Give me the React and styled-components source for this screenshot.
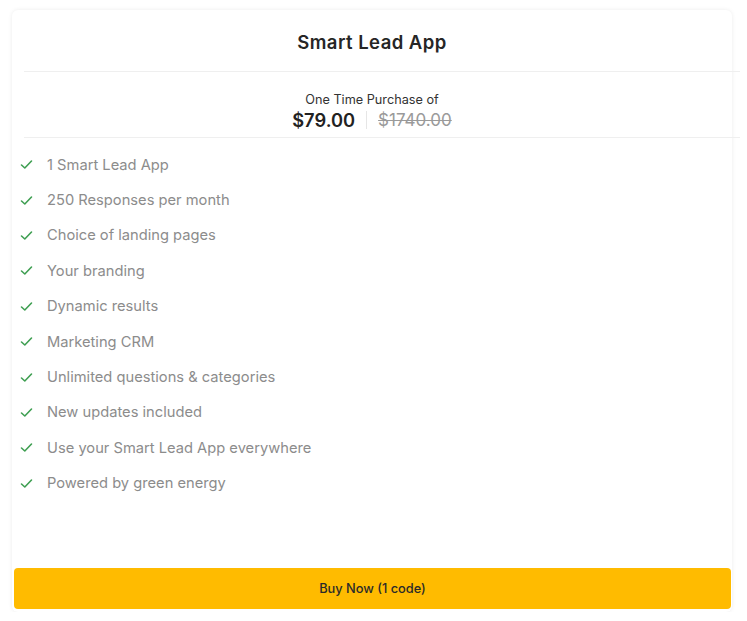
import React from "react";
import styled, { createGlobalStyle } from "styled-components";

const Global = createGlobalStyle`
  html, body { margin: 0; padding: 0; background: #fff; }
  body { font-family: Inter, "Noto Sans", sans-serif; }
`;

const Card = styled.div`
  margin: 10px 0 0 12px;
  width: 720px;
  height: 602px;
  box-sizing: border-box;
  background: #fff;
  border-radius: 6px;
  box-shadow: 0 0 4px rgba(0, 0, 0, 0.08);
  display: flex;
  flex-direction: column;
`;

const Header = styled.div`
  height: 61px;
  padding-top: 2px;
  box-sizing: border-box;
  display: flex;
  align-items: center;
  justify-content: center;
  font-size: 18.5px;
  letter-spacing: 0.45px;
  font-weight: 600;
  color: #262626;
`;

const Divider = styled.div`
  height: 1px;
  background: #efefef;
  margin: 0 -8px 0 12px;
`;

const PriceBlock = styled.div`
  height: 65px;
  display: flex;
  flex-direction: column;
  align-items: center;
  justify-content: center;
  padding-top: 13px;
  box-sizing: border-box;
`;

const Caption = styled.div`
  font-size: 12.7px;
  color: #333;
  line-height: 16px;
`;

const PriceRow = styled.div`
  display: flex;
  align-items: center;
  line-height: 22px;
  margin-top: 1px;
`;

const Price = styled.span`
  font-size: 18.3px;
  font-weight: 600;
  color: #222;
`;

const Sep = styled.span`
  width: 1px;
  height: 18px;
  background: #e6e6e6;
  margin: 0 11px;
`;

const OldPrice = styled.span`
  font-size: 17px;
  color: #9a9a9a;
  text-decoration: line-through;
`;

const List = styled.ul`
  list-style: none;
  margin: 0;
  padding: 9px 0 0 8px;
  display: flex;
  flex-direction: column;
`;

const Item = styled.li`
  height: 35.4px;
  display: flex;
  align-items: center;
  gap: 14px;
  font-size: 14.7px;
  color: #8c8c8c;
`;

const Spacer = styled.div`
  flex: 1;
`;

const BuyButton = styled.button`
  margin: 0 1px 3px 2px;
  height: 41px;
  border: none;
  border-radius: 4px;
  background: #ffbb00;
  color: #2a2a2a;
  font-family: Inter, "Noto Sans", sans-serif;
  font-size: 12.8px;
  font-weight: 500;
  cursor: pointer;
`;

const Check = () => (
  <svg width="13" height="13" viewBox="0 0 13 13" fill="none">
    <path d="M1.5 7 L4.8 10 L11.5 3" stroke="#3f9f52" strokeWidth="1.6" strokeLinecap="round" strokeLinejoin="round" />
  </svg>
);

const features = [
  "1 Smart Lead App",
  "250 Responses per month",
  "Choice of landing pages",
  "Your branding",
  "Dynamic results",
  "Marketing CRM",
  "Unlimited questions & categories",
  "New updates included",
  "Use your Smart Lead App everywhere",
  "Powered by green energy",
];

export default function App() {
  return (
    <>
      <Global />
      <Card>
        <Header>Smart Lead App</Header>
        <Divider />
        <PriceBlock>
          <Caption>One Time Purchase of</Caption>
          <PriceRow>
            <Price>$79.00</Price>
            <Sep />
            <OldPrice>$1740.00</OldPrice>
          </PriceRow>
        </PriceBlock>
        <Divider />
        <List>
          {features.map((f) => (
            <Item key={f}>
              <Check />
              {f}
            </Item>
          ))}
        </List>
        <Spacer />
        <BuyButton>Buy Now (1 code)</BuyButton>
      </Card>
    </>
  );
}
